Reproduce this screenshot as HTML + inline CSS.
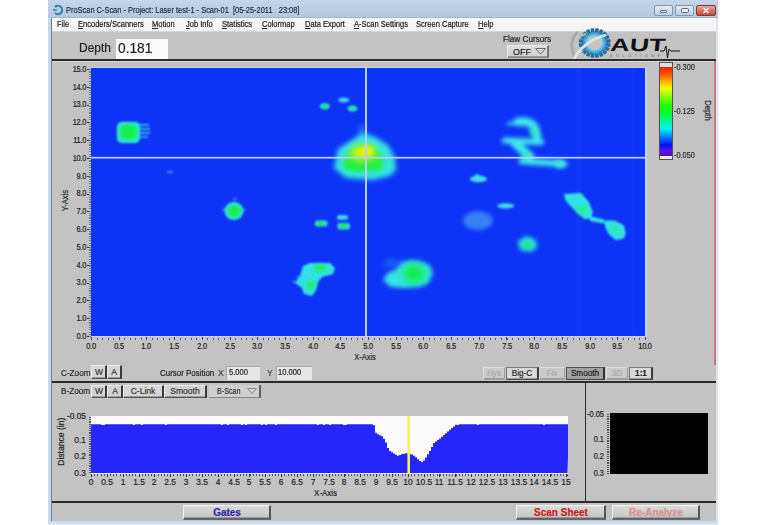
<!DOCTYPE html>
<html><head><meta charset="utf-8">
<style>
*{margin:0;padding:0;box-sizing:border-box;}
html,body{width:768px;height:525px;overflow:hidden;background:#fff;font-family:"Liberation Sans",sans-serif;}
div{position:absolute;white-space:nowrap;line-height:1;-webkit-text-stroke:0.2px currentColor;}
u{text-decoration:underline;text-underline-offset:1px;}
.btn{border-top:1px solid #ececec;border-left:1px solid #ececec;border-right:2px solid #3a3a3a;border-bottom:1px solid #555;box-shadow:inset 0 -1px 0 #9a9a9a;}
</style></head><body>
<div style="left:48px;top:0px;width:670px;height:525px;background:#c6d8ec;"></div>
<div style="left:48px;top:0px;width:670px;height:18px;background:linear-gradient(#c3d6ea,#b2c8e0);"></div>
<div style="left:51px;top:17px;width:667px;height:1px;background:#a4b6cc;"></div>
<svg style="position:absolute;left:52px;top:4px" width="12" height="12"><path d="M3 3 A4.2 4.2 0 1 1 3 9" fill="none" stroke="#2f7f9f" stroke-width="2"/><path d="M1 6 H5" stroke="#2f7f9f" stroke-width="1.5"/></svg>
<div style="left:65.50px;top:5.82px;font-size:9.3px;color:#14203a;font-weight:normal;transform:scaleX(0.8);transform-origin:0 0;-webkit-text-stroke:0.15px #1a2740;">ProScan C-Scan - Project: Laser test-1 - Scan-01&nbsp; [05-25-2011&nbsp;&nbsp; 23:08]</div>
<div style="left:654px;top:5px;width:19px;height:11px;border:1px solid #8296b0;border-radius:2px;background:linear-gradient(#e4edf7,#bccfe4);"></div>
<div style="left:659.5px;top:10px;width:7px;height:3px;border:1px solid #5a6476;border-radius:1px;background:#eef2f7"></div>
<div style="left:675px;top:5px;width:19px;height:11px;border:1px solid #8296b0;border-radius:2px;background:linear-gradient(#e4edf7,#bccfe4);"></div>
<div style="left:681px;top:7.5px;width:8px;height:5.5px;border:1px solid #5a6476;border-top-width:1.5px;border-radius:1.5px;background:#eef2f7"></div>
<div style="left:696px;top:5px;width:20px;height:11px;border:1px solid #7e3c33;border-radius:2px;background:linear-gradient(#eaa397,#c6473c);"></div>
<svg style="position:absolute;left:702px;top:7px" width="8" height="7"><path d="M1.5 1 L6.5 6 M6.5 1 L1.5 6" stroke="#fff" stroke-width="1.4"/></svg>
<div style="left:51px;top:18px;width:667px;height:503px;background:#c3c3c3;"></div>
<div style="left:51px;top:18px;width:1px;height:503px;background:#7c7c7c;"></div>
<div style="left:52px;top:18px;width:665px;height:14px;background:linear-gradient(#f9f7f7,#f3f2f2);"></div>
<div style="left:52px;top:31px;width:665px;height:1px;background:#d6d6d6;"></div>
<div style="left:56.50px;top:20.02px;font-size:9.3px;color:#111;font-weight:normal;transform:scaleX(0.81);transform-origin:0 0;-webkit-text-stroke:0.2px #222;">File</div>
<div style="left:77.80px;top:20.02px;font-size:9.3px;color:#111;font-weight:normal;transform:scaleX(0.81);transform-origin:0 0;-webkit-text-stroke:0.2px #222;"><u>E</u>ncoders/Scanners</div>
<div style="left:152.00px;top:20.02px;font-size:9.3px;color:#111;font-weight:normal;transform:scaleX(0.81);transform-origin:0 0;-webkit-text-stroke:0.2px #222;"><u>M</u>otion</div>
<div style="left:186.00px;top:20.02px;font-size:9.3px;color:#111;font-weight:normal;transform:scaleX(0.81);transform-origin:0 0;-webkit-text-stroke:0.2px #222;"><u>J</u>ob Info</div>
<div style="left:222.30px;top:20.02px;font-size:9.3px;color:#111;font-weight:normal;transform:scaleX(0.81);transform-origin:0 0;-webkit-text-stroke:0.2px #222;"><u>S</u>tatistics</div>
<div style="left:262.00px;top:20.02px;font-size:9.3px;color:#111;font-weight:normal;transform:scaleX(0.81);transform-origin:0 0;-webkit-text-stroke:0.2px #222;"><u>C</u>olormap</div>
<div style="left:305.20px;top:20.02px;font-size:9.3px;color:#111;font-weight:normal;transform:scaleX(0.81);transform-origin:0 0;-webkit-text-stroke:0.2px #222;"><u>D</u>ata Export</div>
<div style="left:353.60px;top:20.02px;font-size:9.3px;color:#111;font-weight:normal;transform:scaleX(0.81);transform-origin:0 0;-webkit-text-stroke:0.2px #222;"><u>A</u>-Scan Settings</div>
<div style="left:416.30px;top:20.02px;font-size:9.3px;color:#111;font-weight:normal;transform:scaleX(0.81);transform-origin:0 0;-webkit-text-stroke:0.2px #222;">Screen Capture</div>
<div style="left:478.00px;top:20.02px;font-size:9.3px;color:#111;font-weight:normal;transform:scaleX(0.81);transform-origin:0 0;-webkit-text-stroke:0.2px #222;"><u>H</u>elp</div>
<div style="left:79.00px;top:41.24px;font-size:13.2px;color:#222;font-weight:normal;transform:scaleX(0.91);transform-origin:0 0;">Depth</div>
<div style="left:115.5px;top:39px;width:52px;height:20px;background:#fbfbfb;"></div>
<div style="left:117.60px;top:40.85px;font-size:14px;color:#222;font-weight:normal;transform:scaleX(0.98);transform-origin:0 0;">0.181</div>
<div style="left:503.30px;top:34.02px;font-size:9.5px;color:#222;font-weight:normal;transform:scaleX(0.86);transform-origin:0 0;">Flaw Cursors</div>
<div class="btn" style="left:507px;top:45px;width:42px;height:13px;background:linear-gradient(#dedede,#cfcfcf);border-right:2px solid #777;border-bottom:1px solid #888;"></div>
<div style="left:513.00px;top:46.72px;font-size:9.5px;color:#222;font-weight:normal;transform:scaleX(0.95);transform-origin:0 0;">OFF</div>
<svg style="position:absolute;left:535px;top:48px" width="11" height="7"><path d="M0.5 0.5 H10.5 L5.5 6 Z" fill="none" stroke="#6a6a6a" stroke-width="1"/></svg>
<svg style="position:absolute;left:566px;top:26px" width="120" height="36" viewBox="0 0 120 36"><defs><radialGradient id="gg" cx="0.5" cy="0.5" r="0.5"><stop offset="0.6" stop-color="#7cd0f0"/><stop offset="1" stop-color="#2a86c0"/></radialGradient></defs><path d="M12 6 C5 11 4 22 9 31" fill="none" stroke="#a9a6a6" stroke-width="2.6"/><g transform="translate(28.7,17) scale(1.08,1)"><rect x="-1.7" y="-14.8" width="3.4" height="4.6" rx="0.5" fill="#1f6fa6" transform="rotate(9)"/><rect x="-1.7" y="-14.8" width="3.4" height="4.6" rx="0.5" fill="#1f6fa6" transform="rotate(27)"/><rect x="-1.7" y="-14.8" width="3.4" height="4.6" rx="0.5" fill="#1f6fa6" transform="rotate(45)"/><rect x="-1.7" y="-14.8" width="3.4" height="4.6" rx="0.5" fill="#1f6fa6" transform="rotate(63)"/><rect x="-1.7" y="-14.8" width="3.4" height="4.6" rx="0.5" fill="#1f6fa6" transform="rotate(81)"/><rect x="-1.7" y="-14.8" width="3.4" height="4.6" rx="0.5" fill="#1f6fa6" transform="rotate(99)"/><rect x="-1.7" y="-14.8" width="3.4" height="4.6" rx="0.5" fill="#1f6fa6" transform="rotate(117)"/><rect x="-1.7" y="-14.8" width="3.4" height="4.6" rx="0.5" fill="#1f6fa6" transform="rotate(135)"/><rect x="-1.7" y="-14.8" width="3.4" height="4.6" rx="0.5" fill="#1f6fa6" transform="rotate(153)"/><rect x="-1.7" y="-14.8" width="3.4" height="4.6" rx="0.5" fill="#1f6fa6" transform="rotate(171)"/><rect x="-1.7" y="-14.8" width="3.4" height="4.6" rx="0.5" fill="#1f6fa6" transform="rotate(189)"/><rect x="-1.7" y="-14.8" width="3.4" height="4.6" rx="0.5" fill="#1f6fa6" transform="rotate(207)"/><rect x="-1.7" y="-14.8" width="3.4" height="4.6" rx="0.5" fill="#1f6fa6" transform="rotate(225)"/><rect x="-1.7" y="-14.8" width="3.4" height="4.6" rx="0.5" fill="#1f6fa6" transform="rotate(243)"/><rect x="-1.7" y="-14.8" width="3.4" height="4.6" rx="0.5" fill="#1f6fa6" transform="rotate(261)"/><rect x="-1.7" y="-14.8" width="3.4" height="4.6" rx="0.5" fill="#1f6fa6" transform="rotate(279)"/><rect x="-1.7" y="-14.8" width="3.4" height="4.6" rx="0.5" fill="#1f6fa6" transform="rotate(297)"/><rect x="-1.7" y="-14.8" width="3.4" height="4.6" rx="0.5" fill="#1f6fa6" transform="rotate(315)"/><rect x="-1.7" y="-14.8" width="3.4" height="4.6" rx="0.5" fill="#1f6fa6" transform="rotate(333)"/><rect x="-1.7" y="-14.8" width="3.4" height="4.6" rx="0.5" fill="#1f6fa6" transform="rotate(351)"/><circle r="11.2" fill="url(#gg)"/><circle r="6.8" fill="#c8c3c3"/></g><path d="M8 33 C12 24 24 13 40 9" fill="none" stroke="#e4e2e2" stroke-width="2.6"/><path d="M11 15 C13 11 16 9 20 8" fill="none" stroke="#bdbdbd" stroke-width="2.5" opacity="0.8"/><text x="44" y="25" font-family="Liberation Sans" font-weight="bold" font-size="18" fill="#111" textLength="55" lengthAdjust="spacingAndGlyphs" transform="skewX(-6) translate(2.5,0)">AUT</text><text x="44" y="31" font-family="Liberation Sans" font-size="3.6" fill="#666" textLength="50" lengthAdjust="spacing">SOLUTIONS</text><path d="M94 25 H98 L100 20 L101.5 32 L103 23 L104.5 25 H114" fill="none" stroke="#111" stroke-width="1"/></svg>
<div style="left:52px;top:59px;width:665px;height:2px;background:#2c2c2c;"></div>
<div style="left:86.00px;top:331.85px;font-size:8.6px;color:#1c1c1c;font-weight:normal;transform:translateX(-100%) scaleX(0.86);transform-origin:100% 0;letter-spacing:-0.3px;">0.0</div>
<div style="left:86.00px;top:314.05px;font-size:8.6px;color:#1c1c1c;font-weight:normal;transform:translateX(-100%) scaleX(0.86);transform-origin:100% 0;letter-spacing:-0.3px;">1.0</div>
<div style="left:86.00px;top:296.25px;font-size:8.6px;color:#1c1c1c;font-weight:normal;transform:translateX(-100%) scaleX(0.86);transform-origin:100% 0;letter-spacing:-0.3px;">2.0</div>
<div style="left:86.00px;top:278.45px;font-size:8.6px;color:#1c1c1c;font-weight:normal;transform:translateX(-100%) scaleX(0.86);transform-origin:100% 0;letter-spacing:-0.3px;">3.0</div>
<div style="left:86.00px;top:260.65px;font-size:8.6px;color:#1c1c1c;font-weight:normal;transform:translateX(-100%) scaleX(0.86);transform-origin:100% 0;letter-spacing:-0.3px;">4.0</div>
<div style="left:86.00px;top:242.85px;font-size:8.6px;color:#1c1c1c;font-weight:normal;transform:translateX(-100%) scaleX(0.86);transform-origin:100% 0;letter-spacing:-0.3px;">5.0</div>
<div style="left:86.00px;top:225.05px;font-size:8.6px;color:#1c1c1c;font-weight:normal;transform:translateX(-100%) scaleX(0.86);transform-origin:100% 0;letter-spacing:-0.3px;">6.0</div>
<div style="left:86.00px;top:207.25px;font-size:8.6px;color:#1c1c1c;font-weight:normal;transform:translateX(-100%) scaleX(0.86);transform-origin:100% 0;letter-spacing:-0.3px;">7.0</div>
<div style="left:86.00px;top:189.45px;font-size:8.6px;color:#1c1c1c;font-weight:normal;transform:translateX(-100%) scaleX(0.86);transform-origin:100% 0;letter-spacing:-0.3px;">8.0</div>
<div style="left:86.00px;top:171.65px;font-size:8.6px;color:#1c1c1c;font-weight:normal;transform:translateX(-100%) scaleX(0.86);transform-origin:100% 0;letter-spacing:-0.3px;">9.0</div>
<div style="left:86.00px;top:153.85px;font-size:8.6px;color:#1c1c1c;font-weight:normal;transform:translateX(-100%) scaleX(0.86);transform-origin:100% 0;letter-spacing:-0.3px;">10.0</div>
<div style="left:86.00px;top:136.05px;font-size:8.6px;color:#1c1c1c;font-weight:normal;transform:translateX(-100%) scaleX(0.86);transform-origin:100% 0;letter-spacing:-0.3px;">11.0</div>
<div style="left:86.00px;top:118.25px;font-size:8.6px;color:#1c1c1c;font-weight:normal;transform:translateX(-100%) scaleX(0.86);transform-origin:100% 0;letter-spacing:-0.3px;">12.0</div>
<div style="left:86.00px;top:100.45px;font-size:8.6px;color:#1c1c1c;font-weight:normal;transform:translateX(-100%) scaleX(0.86);transform-origin:100% 0;letter-spacing:-0.3px;">13.0</div>
<div style="left:86.00px;top:82.65px;font-size:8.6px;color:#1c1c1c;font-weight:normal;transform:translateX(-100%) scaleX(0.86);transform-origin:100% 0;letter-spacing:-0.3px;">14.0</div>
<div style="left:86.00px;top:64.85px;font-size:8.6px;color:#1c1c1c;font-weight:normal;transform:translateX(-100%) scaleX(0.86);transform-origin:100% 0;letter-spacing:-0.3px;">15.0</div>
<div style="left:89px;top:68px;width:2px;height:269px;background:repeating-linear-gradient(#c8c8c8 0 0.9px,#3a3a3a 0.9px 1.78px);opacity:0.55"></div>
<div style="left:87px;top:336px;width:2px;height:1px;background:#333;"></div>
<div style="left:87px;top:318px;width:2px;height:1px;background:#333;"></div>
<div style="left:87px;top:300px;width:2px;height:1px;background:#333;"></div>
<div style="left:87px;top:283px;width:2px;height:1px;background:#333;"></div>
<div style="left:87px;top:265px;width:2px;height:1px;background:#333;"></div>
<div style="left:87px;top:247px;width:2px;height:1px;background:#333;"></div>
<div style="left:87px;top:229px;width:2px;height:1px;background:#333;"></div>
<div style="left:87px;top:211px;width:2px;height:1px;background:#333;"></div>
<div style="left:87px;top:194px;width:2px;height:1px;background:#333;"></div>
<div style="left:87px;top:176px;width:2px;height:1px;background:#333;"></div>
<div style="left:87px;top:158px;width:2px;height:1px;background:#333;"></div>
<div style="left:87px;top:140px;width:2px;height:1px;background:#333;"></div>
<div style="left:87px;top:122px;width:2px;height:1px;background:#333;"></div>
<div style="left:87px;top:105px;width:2px;height:1px;background:#333;"></div>
<div style="left:87px;top:87px;width:2px;height:1px;background:#333;"></div>
<div style="left:87px;top:69px;width:2px;height:1px;background:#333;"></div>
<div style="left:65.00px;top:196.36px;font-size:9px;color:#2a2a2a;font-weight:normal;transform:translateX(-50%) scaleX(0.85);transform-origin:50% 0;transform:translate(-50%,0) rotate(-90deg) scaleX(0.85);transform-origin:50% 50%;">Y-Axis</div>
<div style="left:91px;top:338px;width:555px;height:2px;background:repeating-linear-gradient(90deg,#3a3a3a 0 1px,#c8c8c8 1px 5.54px);opacity:0.8"></div>
<div style="left:91px;top:337px;width:1px;height:3px;background:#444;"></div>
<div style="left:91.00px;top:341.85px;font-size:8.6px;color:#1c1c1c;font-weight:normal;transform:translateX(-50%) scaleX(0.86);transform-origin:50% 0;letter-spacing:-0.3px;">0.0</div>
<div style="left:119px;top:337px;width:1px;height:3px;background:#444;"></div>
<div style="left:118.70px;top:341.85px;font-size:8.6px;color:#1c1c1c;font-weight:normal;transform:translateX(-50%) scaleX(0.86);transform-origin:50% 0;letter-spacing:-0.3px;">0.5</div>
<div style="left:146px;top:337px;width:1px;height:3px;background:#444;"></div>
<div style="left:146.40px;top:341.85px;font-size:8.6px;color:#1c1c1c;font-weight:normal;transform:translateX(-50%) scaleX(0.86);transform-origin:50% 0;letter-spacing:-0.3px;">1.0</div>
<div style="left:174px;top:337px;width:1px;height:3px;background:#444;"></div>
<div style="left:174.10px;top:341.85px;font-size:8.6px;color:#1c1c1c;font-weight:normal;transform:translateX(-50%) scaleX(0.86);transform-origin:50% 0;letter-spacing:-0.3px;">1.5</div>
<div style="left:202px;top:337px;width:1px;height:3px;background:#444;"></div>
<div style="left:201.80px;top:341.85px;font-size:8.6px;color:#1c1c1c;font-weight:normal;transform:translateX(-50%) scaleX(0.86);transform-origin:50% 0;letter-spacing:-0.3px;">2.0</div>
<div style="left:230px;top:337px;width:1px;height:3px;background:#444;"></div>
<div style="left:229.50px;top:341.85px;font-size:8.6px;color:#1c1c1c;font-weight:normal;transform:translateX(-50%) scaleX(0.86);transform-origin:50% 0;letter-spacing:-0.3px;">2.5</div>
<div style="left:257px;top:337px;width:1px;height:3px;background:#444;"></div>
<div style="left:257.20px;top:341.85px;font-size:8.6px;color:#1c1c1c;font-weight:normal;transform:translateX(-50%) scaleX(0.86);transform-origin:50% 0;letter-spacing:-0.3px;">3.0</div>
<div style="left:285px;top:337px;width:1px;height:3px;background:#444;"></div>
<div style="left:284.90px;top:341.85px;font-size:8.6px;color:#1c1c1c;font-weight:normal;transform:translateX(-50%) scaleX(0.86);transform-origin:50% 0;letter-spacing:-0.3px;">3.5</div>
<div style="left:313px;top:337px;width:1px;height:3px;background:#444;"></div>
<div style="left:312.60px;top:341.85px;font-size:8.6px;color:#1c1c1c;font-weight:normal;transform:translateX(-50%) scaleX(0.86);transform-origin:50% 0;letter-spacing:-0.3px;">4.0</div>
<div style="left:340px;top:337px;width:1px;height:3px;background:#444;"></div>
<div style="left:340.30px;top:341.85px;font-size:8.6px;color:#1c1c1c;font-weight:normal;transform:translateX(-50%) scaleX(0.86);transform-origin:50% 0;letter-spacing:-0.3px;">4.5</div>
<div style="left:368px;top:337px;width:1px;height:3px;background:#444;"></div>
<div style="left:368.00px;top:341.85px;font-size:8.6px;color:#1c1c1c;font-weight:normal;transform:translateX(-50%) scaleX(0.86);transform-origin:50% 0;letter-spacing:-0.3px;">5.0</div>
<div style="left:396px;top:337px;width:1px;height:3px;background:#444;"></div>
<div style="left:395.70px;top:341.85px;font-size:8.6px;color:#1c1c1c;font-weight:normal;transform:translateX(-50%) scaleX(0.86);transform-origin:50% 0;letter-spacing:-0.3px;">5.5</div>
<div style="left:423px;top:337px;width:1px;height:3px;background:#444;"></div>
<div style="left:423.40px;top:341.85px;font-size:8.6px;color:#1c1c1c;font-weight:normal;transform:translateX(-50%) scaleX(0.86);transform-origin:50% 0;letter-spacing:-0.3px;">6.0</div>
<div style="left:451px;top:337px;width:1px;height:3px;background:#444;"></div>
<div style="left:451.10px;top:341.85px;font-size:8.6px;color:#1c1c1c;font-weight:normal;transform:translateX(-50%) scaleX(0.86);transform-origin:50% 0;letter-spacing:-0.3px;">6.5</div>
<div style="left:479px;top:337px;width:1px;height:3px;background:#444;"></div>
<div style="left:478.80px;top:341.85px;font-size:8.6px;color:#1c1c1c;font-weight:normal;transform:translateX(-50%) scaleX(0.86);transform-origin:50% 0;letter-spacing:-0.3px;">7.0</div>
<div style="left:506px;top:337px;width:1px;height:3px;background:#444;"></div>
<div style="left:506.50px;top:341.85px;font-size:8.6px;color:#1c1c1c;font-weight:normal;transform:translateX(-50%) scaleX(0.86);transform-origin:50% 0;letter-spacing:-0.3px;">7.5</div>
<div style="left:534px;top:337px;width:1px;height:3px;background:#444;"></div>
<div style="left:534.20px;top:341.85px;font-size:8.6px;color:#1c1c1c;font-weight:normal;transform:translateX(-50%) scaleX(0.86);transform-origin:50% 0;letter-spacing:-0.3px;">8.0</div>
<div style="left:562px;top:337px;width:1px;height:3px;background:#444;"></div>
<div style="left:561.90px;top:341.85px;font-size:8.6px;color:#1c1c1c;font-weight:normal;transform:translateX(-50%) scaleX(0.86);transform-origin:50% 0;letter-spacing:-0.3px;">8.5</div>
<div style="left:590px;top:337px;width:1px;height:3px;background:#444;"></div>
<div style="left:589.60px;top:341.85px;font-size:8.6px;color:#1c1c1c;font-weight:normal;transform:translateX(-50%) scaleX(0.86);transform-origin:50% 0;letter-spacing:-0.3px;">9.0</div>
<div style="left:617px;top:337px;width:1px;height:3px;background:#444;"></div>
<div style="left:617.30px;top:341.85px;font-size:8.6px;color:#1c1c1c;font-weight:normal;transform:translateX(-50%) scaleX(0.86);transform-origin:50% 0;letter-spacing:-0.3px;">9.5</div>
<div style="left:645px;top:337px;width:1px;height:3px;background:#444;"></div>
<div style="left:645.00px;top:341.85px;font-size:8.6px;color:#1c1c1c;font-weight:normal;transform:translateX(-50%) scaleX(0.86);transform-origin:50% 0;letter-spacing:-0.3px;">10.0</div>
<div style="left:364.50px;top:352.76px;font-size:8.8px;color:#2a2a2a;font-weight:normal;transform:translateX(-50%) scaleX(0.85);transform-origin:50% 0;">X-Axis</div>
<svg style="position:absolute;left:91px;top:68px" width="554" height="268" viewBox="91 68 554 268">
<defs>
<filter id="b1" x="-50%" y="-50%" width="200%" height="200%"><feGaussianBlur stdDeviation="1.9"/></filter>
<filter id="b2" x="-50%" y="-50%" width="200%" height="200%"><feGaussianBlur stdDeviation="2.6"/></filter>
<filter id="b3" x="-50%" y="-50%" width="200%" height="200%"><feGaussianBlur stdDeviation="4"/></filter>
<filter id="b0" x="-50%" y="-50%" width="200%" height="200%"><feGaussianBlur stdDeviation="1"/></filter>
</defs>
<rect x="91" y="68" width="554" height="268" fill="#0d33f6"/>
<!-- faint vertical stripes -->
<rect x="577" y="68" width="3" height="268" fill="#2048f6" opacity="0.45" filter="url(#b0)"/>
<rect x="632" y="68" width="3" height="268" fill="#1a40f4" opacity="0.4" filter="url(#b0)"/>
<!-- blob 1 rectangular -->
<g filter="url(#b0)">
<rect x="117" y="122" width="23" height="21" rx="5" fill="#36e6e6"/>
<rect x="138" y="124" width="11" height="2" fill="#40d0f0" opacity="0.8"/>
<rect x="138" y="128" width="12" height="2" fill="#40d0f0" opacity="0.8"/>
<rect x="138" y="132" width="12" height="2" fill="#40d0f0" opacity="0.8"/>
<rect x="138" y="136" width="10" height="2" fill="#40d0f0" opacity="0.7"/>
</g>
<g filter="url(#b1)"><rect x="120" y="124" width="17" height="16" rx="5" fill="#14f050"/></g>
<g filter="url(#b0)"><ellipse cx="170" cy="172" rx="3" ry="1.2" fill="#4a90f4"/><ellipse cx="235" cy="199" rx="2.5" ry="1.2" fill="#3a70f4"/></g>
<!-- blob 2 -->
<g filter="url(#b0)"><ellipse cx="234" cy="211" rx="9.5" ry="9" fill="#36e2e2"/>
<rect x="222" y="209" width="24" height="1.5" fill="#40c8f0" opacity="0.7"/></g>
<g filter="url(#b1)"><ellipse cx="234" cy="211" rx="6.5" ry="6.5" fill="#14f048"/></g>
<!-- small top -->
<g filter="url(#b0)">
<ellipse cx="324.8" cy="106.2" rx="5" ry="3.2" fill="#30e0c0"/>
<ellipse cx="343.8" cy="100" rx="5.5" ry="2.6" fill="#40d8f0"/>
<ellipse cx="352.4" cy="108.5" rx="5" ry="3" fill="#30e0c0"/>
</g>
<g filter="url(#b0)">
<ellipse cx="324.8" cy="106.2" rx="2.5" ry="1.6" fill="#10e070"/>
<ellipse cx="352.4" cy="108.5" rx="2.5" ry="1.5" fill="#10e070"/>
</g>
<!-- main blob -->
<g filter="url(#b2)">
<ellipse cx="362" cy="130" rx="3" ry="6" fill="#2a7cf6" opacity="0.8"/>
<path d="M334 168 L338 149 L352 140 L362 133 L373 136 L388 145 L395 158 L396 170 L390 176 L372 180 L346 178 Z" fill="#36e4e4"/>
</g>
<g filter="url(#b2)">
<path d="M343 165 L347 153 L358 146 L368 145 L379 151 L384 162 L381 170 L360 172 L345 170 Z" fill="#20f040"/>
</g>
<g filter="url(#b3)">
<ellipse cx="363" cy="153" rx="13" ry="7" fill="#e8f800"/>
</g>
<g filter="url(#b2)">
<ellipse cx="367" cy="150" rx="6" ry="4" fill="#f8f000"/>
</g>
<!-- small mid -->
<g filter="url(#b0)">
<rect x="315" y="220.5" width="12.5" height="6" rx="2" fill="#30e0c0"/>
<rect x="337" y="215" width="11" height="4.8" rx="2" fill="#40d8f0"/>
<rect x="337.5" y="223" width="12.5" height="6.4" rx="2" fill="#30e0c0"/>
<rect x="318" y="222" width="6" height="3" fill="#10e860"/>
<rect x="340.5" y="224.5" width="6" height="3.4" fill="#10e860"/>
</g>
<!-- cluster -->
<g filter="url(#b0)">
<path d="M303 266 L310 263 L330 263 L335 268 L333 274 L322 277 L318 282 L316 290 L312 296 L304 294 L302 288 L295 283 L300 276 Z" fill="#36e2e2"/>
<rect x="292" y="281" width="14" height="1.5" fill="#40c8f0" opacity="0.7"/>
<rect x="296" y="276" width="10" height="1.5" fill="#40c8f0" opacity="0.7"/>
</g>
<g filter="url(#b1)">
<ellipse cx="320" cy="268" rx="6" ry="3.5" fill="#14f048"/>
<ellipse cx="311" cy="285" rx="4.5" ry="3.5" fill="#14f048"/>
</g>
<!-- blob 7 -->
<g filter="url(#b1)">
<path d="M383.3 280 L387.3 273.3 L396.7 269.3 L402 262.7 L410 260 L420.7 261.3 L430 265.3 L432.7 273.3 L428.7 282.7 L420.7 286.7 L403.3 288 L390 286.7 Z" fill="#36e4e4"/>
<path d="M386 260 L402 262 M384 265 L398 266" stroke="#30c0f0" stroke-width="1.5" opacity="0.8"/>
</g>
<g filter="url(#b3)"><ellipse cx="414" cy="273.5" rx="11" ry="9" fill="#10f040"/></g>
<!-- "2" shape -->
<g filter="url(#b1)" fill="none" stroke="#40e8ea" stroke-linecap="round" stroke-linejoin="round">
<path d="M508 124 L520 122" stroke-width="3"/>
<path d="M518 122 Q530 120 535 128 L537 137" stroke-width="8.5"/>
<path d="M505 140.5 L541 142" stroke-width="6"/>
<path d="M515 143 L530 157" stroke-width="9"/>
<path d="M522 161 L560 163.5" stroke-width="6.5"/>
</g>
<g filter="url(#b1)"><ellipse cx="561" cy="164" rx="6.5" ry="4" fill="#40e8ea"/></g>
<g filter="url(#b1)" fill="#28f0a8"><ellipse cx="533" cy="132" rx="3.5" ry="3"/><ellipse cx="527" cy="156" rx="4" ry="3"/></g>
<!-- right small -->
<g filter="url(#b0)">
<path d="M470 181 L477 173.5 L487 181 Z" fill="#40e0e8"/>
<ellipse cx="478.5" cy="179" rx="8.5" ry="3.2" fill="#40e0e8"/>
<ellipse cx="505.7" cy="205.8" rx="8.5" ry="2.6" fill="#40d8e8"/>
</g>
<g filter="url(#b1)"><ellipse cx="478" cy="220.6" rx="15" ry="9.5" fill="#3a88f4" opacity="0.9"/></g>
<g filter="url(#b1)">
<path d="M518 241 L527 236 L536 240 L537 248 L530 252 L520 250 Z" fill="#30e0e0"/>
<ellipse cx="527" cy="245" rx="5" ry="3.5" fill="#10f050"/>
</g>
<!-- diagonal streak -->
<g filter="url(#b0)" fill="#36e2e2">
<path d="M564 194 L581 193 L589 202 L592.7 211.3 L591.6 218 L584.7 219.3 L577.9 213.6 L569.9 205.6 L565.3 199.9 Z"/>
<path d="M589 216 L604 219.5 L604 223.5 L590 221 Z"/>
<path d="M604 220.4 L614.4 220.4 L623.6 225 L625.9 233 L623.6 238.7 L615.6 239.9 L608.7 234 L605.3 227.3 Z"/>
</g>
<g filter="url(#b1)" fill="#20f080"><ellipse cx="582" cy="210" rx="5" ry="4"/><ellipse cx="616" cy="229" rx="3" ry="3"/></g>
<!-- crosshair -->
<rect x="365" y="68" width="2" height="268" fill="#b8cef6"/>
<rect x="91" y="156.8" width="554" height="1.8" fill="#b8cef6"/>
</svg>
<div style="left:645px;top:67px;width:2px;height:270px;background:#c9d4f4;"></div>
<div style="left:91px;top:67px;width:556px;height:1px;background:#c6d2ea;"></div>
<div style="left:52px;top:61px;width:665px;height:1px;background:#d6d6d6;"></div>
<div style="left:91px;top:336px;width:556px;height:1px;background:#c9d4f4;"></div>
<div style="left:659px;top:62px;width:14px;height:98px;border:1px solid #505050;background:linear-gradient(#e0e0e0 0 4px,#ff1a00 4px,#ff5a00 12px,#ffd000 21px,#e8ff00 26px,#20ff00 42px,#00ff40 52px,#00f0ff 66px,#0060ff 76px,#0010ff 82px,#6010e0 88px,#5010c0 93px,#e8e8e8 93px);"></div>
<div style="left:673.50px;top:62.66px;font-size:9px;color:#2a2a2a;font-weight:normal;transform:scaleX(0.82);transform-origin:0 0;">-0.300</div>
<div style="left:673.50px;top:106.66px;font-size:9px;color:#2a2a2a;font-weight:normal;transform:scaleX(0.82);transform-origin:0 0;">-0.125</div>
<div style="left:673.50px;top:151.26px;font-size:9px;color:#2a2a2a;font-weight:normal;transform:scaleX(0.82);transform-origin:0 0;">-0.050</div>
<div style="left:707.00px;top:105.66px;font-size:9px;color:#2a2a2a;font-weight:normal;transform:translateX(-50%) scaleX(0.86);transform-origin:50% 0;transform:translate(-50%,0) rotate(90deg) scaleX(0.86);transform-origin:50% 50%;">Depth</div>
<div style="left:714px;top:61px;width:2px;height:304px;background:#c77a78;"></div>
<div style="left:60.70px;top:368.42px;font-size:9.5px;color:#2a2a2a;font-weight:normal;transform:scaleX(0.86);transform-origin:0 0;">C-Zoom</div>
<div class="btn" style="left:91px;top:365px;width:16px;height:14px;background:#d6d6d6;"></div>
<div style="left:98.50px;top:367.42px;font-size:9.5px;color:#333;font-weight:normal;transform:translateX(-50%) scaleX(0.9);transform-origin:50% 0;">W</div>
<div class="btn" style="left:107px;top:365px;width:15px;height:14px;background:#d6d6d6;"></div>
<div style="left:114.00px;top:367.42px;font-size:9.5px;color:#333;font-weight:normal;transform:translateX(-50%) scaleX(0.9);transform-origin:50% 0;">A</div>
<div style="left:159.80px;top:368.02px;font-size:9.5px;color:#222;font-weight:normal;transform:scaleX(0.835);transform-origin:0 0;">Cursor Position</div>
<div style="left:218.40px;top:368.02px;font-size:9.5px;color:#444;font-weight:normal;transform:scaleX(0.9);transform-origin:0 0;">X</div>
<div style="left:226px;top:365.5px;width:34px;height:14px;background:#e6e6e6;border-top:1px solid #a8a8a8;border-left:1px solid #a8a8a8;"></div>
<div style="left:228.50px;top:368.45px;font-size:8.6px;color:#222;font-weight:normal;transform:scaleX(0.88);transform-origin:0 0;">5.000</div>
<div style="left:267.00px;top:368.02px;font-size:9.5px;color:#444;font-weight:normal;transform:scaleX(0.9);transform-origin:0 0;">Y</div>
<div style="left:275.5px;top:365.5px;width:36px;height:14px;background:#e6e6e6;border-top:1px solid #a8a8a8;border-left:1px solid #a8a8a8;"></div>
<div style="left:278.00px;top:368.45px;font-size:8.6px;color:#222;font-weight:normal;transform:scaleX(0.88);transform-origin:0 0;">10.000</div>
<div class="btn" style="left:483px;top:367px;width:22px;height:13px;background:#cacaca;border-top:1px solid #dedede;border-left:1px solid #dedede;border-right:1px solid #9c9c9c;border-bottom:1px solid #a4a4a4;"></div>
<div style="left:493.50px;top:369.32px;font-size:9.3px;color:#ababab;font-weight:normal;transform:translateX(-50%) scaleX(0.88);transform-origin:50% 0;">Hys</div>
<div class="btn" style="left:506px;top:367px;width:33px;height:13px;background:#d9d9d9;border-top:1px solid #7a7a7a;border-left:1px solid #7a7a7a;border-right:2px solid #3a3a3a;border-bottom:1px solid #4a4a4a;"></div>
<div style="left:522.00px;top:369.32px;font-size:9.3px;color:#262626;font-weight:normal;transform:translateX(-50%) scaleX(0.88);transform-origin:50% 0;">Big-C</div>
<div class="btn" style="left:539px;top:367px;width:26px;height:13px;background:#cacaca;border-top:1px solid #dedede;border-left:1px solid #dedede;border-right:1px solid #9c9c9c;border-bottom:1px solid #a4a4a4;"></div>
<div style="left:551.50px;top:369.32px;font-size:9.3px;color:#ababab;font-weight:normal;transform:translateX(-50%) scaleX(0.88);transform-origin:50% 0;">Fix</div>
<div class="btn" style="left:566px;top:367px;width:39px;height:13px;background:#a2a2a2;border-top:1px solid #555;border-left:1px solid #555;border-right:2px solid #333;border-bottom:1px solid #444;"></div>
<div style="left:585.00px;top:369.32px;font-size:9.3px;color:#1a1a1a;font-weight:normal;transform:translateX(-50%) scaleX(0.88);transform-origin:50% 0;">Smooth</div>
<div class="btn" style="left:606px;top:367px;width:22px;height:13px;background:#cacaca;border-top:1px solid #dedede;border-left:1px solid #dedede;border-right:1px solid #9c9c9c;border-bottom:1px solid #a4a4a4;"></div>
<div style="left:616.50px;top:369.32px;font-size:9.3px;color:#ababab;font-weight:normal;transform:translateX(-50%) scaleX(0.88);transform-origin:50% 0;">3D</div>
<div class="btn" style="left:629px;top:367px;width:24px;height:13px;background:#d9d9d9;border-top:1px solid #7a7a7a;border-left:1px solid #7a7a7a;border-right:2px solid #3a3a3a;border-bottom:1px solid #4a4a4a;"></div>
<div style="left:640.50px;top:369.32px;font-size:9.3px;color:#222;font-weight:bold;transform:translateX(-50%) scaleX(0.88);transform-origin:50% 0;">1:1</div>
<div style="left:52px;top:381px;width:664px;height:2px;background:#2c2c2c;"></div>
<div style="left:584.5px;top:382px;width:1.8px;height:119px;background:#2c2c2c;"></div>
<div style="left:61.00px;top:386.22px;font-size:9.5px;color:#2a2a2a;font-weight:normal;transform:scaleX(0.86);transform-origin:0 0;">B-Zoom</div>
<div class="btn" style="left:91px;top:384.5px;width:16px;height:13.0px;background:#d2d2d2;"></div>
<div style="left:98.50px;top:386.22px;font-size:9.5px;color:#333;font-weight:normal;transform:translateX(-50%) scaleX(0.9);transform-origin:50% 0;">W</div>
<div class="btn" style="left:107px;top:384.5px;width:16px;height:13.0px;background:#d2d2d2;"></div>
<div style="left:114.50px;top:386.22px;font-size:9.5px;color:#333;font-weight:normal;transform:translateX(-50%) scaleX(0.9);transform-origin:50% 0;">A</div>
<div class="btn" style="left:123px;top:384.5px;width:41px;height:13.0px;background:#d6d6d6;"></div>
<div style="left:143.00px;top:386.22px;font-size:9.5px;color:#333;font-weight:normal;transform:translateX(-50%) scaleX(0.9);transform-origin:50% 0;">C-Link</div>
<div class="btn" style="left:164px;top:384.5px;width:43px;height:13.0px;background:#d2d2d2;"></div>
<div style="left:185.00px;top:386.22px;font-size:9.5px;color:#333;font-weight:normal;transform:translateX(-50%) scaleX(0.9);transform-origin:50% 0;">Smooth</div>
<div style="left:209px;top:384.5px;width:52px;height:13px;background:#cfcfcf;border-right:2px solid #606060;border-bottom:1px solid #888;"></div>
<div style="left:216.60px;top:386.66px;font-size:9px;color:#333;font-weight:normal;transform:scaleX(0.8);transform-origin:0 0;">B-Scan</div>
<svg style="position:absolute;left:247px;top:388px" width="10" height="7"><path d="M0.5 0.5 H9.5 L5 5.5 Z" fill="none" stroke="#8a8a8a" stroke-width="1"/></svg>
<svg style="position:absolute;left:91px;top:416px" width="477" height="58" viewBox="91 416 477 58">
<rect x="91" y="416" width="477" height="58" fill="#fbfbfb"/>
<path d="M91 473 L91.0 424.3 L93.0 424.3 L93.0 424.3 L95.0 424.3 L95.0 424.3 L97.0 424.3 L97.0 424.3 L99.0 424.3 L99.0 424.3 L101.0 424.3 L101.0 425.1 L103.0 425.1 L103.0 425.1 L105.0 425.1 L105.0 424.3 L107.0 424.3 L107.0 424.3 L109.0 424.3 L109.0 424.3 L111.0 424.3 L111.0 424.3 L113.0 424.3 L113.0 424.3 L115.0 424.3 L115.0 424.3 L117.0 424.3 L117.0 424.3 L119.0 424.3 L119.0 424.3 L121.0 424.3 L121.0 424.3 L123.0 424.3 L123.0 424.3 L125.0 424.3 L125.0 424.3 L127.0 424.3 L127.0 424.3 L129.0 424.3 L129.0 424.3 L131.0 424.3 L131.0 424.3 L133.0 424.3 L133.0 425.1 L135.0 425.1 L135.0 424.3 L137.0 424.3 L137.0 424.3 L139.0 424.3 L139.0 424.3 L141.0 424.3 L141.0 425.1 L143.0 425.1 L143.0 424.3 L145.0 424.3 L145.0 424.3 L147.0 424.3 L147.0 424.3 L149.0 424.3 L149.0 424.3 L151.0 424.3 L151.0 424.3 L153.0 424.3 L153.0 424.3 L155.0 424.3 L155.0 424.3 L157.0 424.3 L157.0 424.3 L159.0 424.3 L159.0 424.3 L161.0 424.3 L161.0 424.3 L163.0 424.3 L163.0 424.3 L165.0 424.3 L165.0 425.1 L167.0 425.1 L167.0 424.3 L169.0 424.3 L169.0 424.3 L171.0 424.3 L171.0 424.3 L173.0 424.3 L173.0 424.3 L175.0 424.3 L175.0 424.3 L177.0 424.3 L177.0 424.3 L179.0 424.3 L179.0 424.3 L181.0 424.3 L181.0 424.3 L183.0 424.3 L183.0 424.3 L185.0 424.3 L185.0 424.3 L187.0 424.3 L187.0 424.3 L189.0 424.3 L189.0 424.3 L191.0 424.3 L191.0 424.3 L193.0 424.3 L193.0 424.3 L195.0 424.3 L195.0 424.3 L197.0 424.3 L197.0 424.3 L199.0 424.3 L199.0 424.3 L201.0 424.3 L201.0 424.3 L203.0 424.3 L203.0 424.3 L205.0 424.3 L205.0 424.3 L207.0 424.3 L207.0 424.3 L209.0 424.3 L209.0 424.3 L211.0 424.3 L211.0 424.3 L213.0 424.3 L213.0 424.3 L215.0 424.3 L215.0 424.3 L217.0 424.3 L217.0 424.3 L219.0 424.3 L219.0 424.3 L221.0 424.3 L221.0 425.1 L223.0 425.1 L223.0 424.3 L225.0 424.3 L225.0 424.3 L227.0 424.3 L227.0 425.1 L229.0 425.1 L229.0 424.3 L231.0 424.3 L231.0 424.3 L233.0 424.3 L233.0 424.3 L235.0 424.3 L235.0 424.3 L237.0 424.3 L237.0 424.3 L239.0 424.3 L239.0 424.3 L241.0 424.3 L241.0 425.1 L243.0 425.1 L243.0 424.3 L245.0 424.3 L245.0 425.1 L247.0 425.1 L247.0 424.3 L249.0 424.3 L249.0 424.3 L251.0 424.3 L251.0 424.3 L253.0 424.3 L253.0 424.3 L255.0 424.3 L255.0 424.3 L257.0 424.3 L257.0 424.3 L259.0 424.3 L259.0 424.3 L261.0 424.3 L261.0 425.1 L263.0 425.1 L263.0 424.3 L265.0 424.3 L265.0 425.1 L267.0 425.1 L267.0 424.3 L269.0 424.3 L269.0 424.3 L271.0 424.3 L271.0 424.3 L273.0 424.3 L273.0 424.3 L275.0 424.3 L275.0 425.1 L277.0 425.1 L277.0 424.3 L279.0 424.3 L279.0 424.3 L281.0 424.3 L281.0 424.3 L283.0 424.3 L283.0 424.3 L285.0 424.3 L285.0 424.3 L287.0 424.3 L287.0 424.3 L289.0 424.3 L289.0 424.3 L291.0 424.3 L291.0 424.3 L293.0 424.3 L293.0 424.3 L295.0 424.3 L295.0 424.3 L297.0 424.3 L297.0 424.3 L299.0 424.3 L299.0 424.3 L301.0 424.3 L301.0 424.3 L303.0 424.3 L303.0 424.3 L305.0 424.3 L305.0 424.3 L307.0 424.3 L307.0 424.3 L309.0 424.3 L309.0 424.3 L311.0 424.3 L311.0 424.3 L313.0 424.3 L313.0 424.3 L315.0 424.3 L315.0 424.3 L317.0 424.3 L317.0 425.1 L319.0 425.1 L319.0 424.3 L321.0 424.3 L321.0 424.3 L323.0 424.3 L323.0 425.1 L325.0 425.1 L325.0 424.3 L327.0 424.3 L327.0 424.3 L329.0 424.3 L329.0 425.1 L331.0 425.1 L331.0 424.3 L333.0 424.3 L333.0 424.3 L335.0 424.3 L335.0 424.3 L337.0 424.3 L337.0 424.3 L339.0 424.3 L339.0 424.3 L341.0 424.3 L341.0 424.3 L343.0 424.3 L343.0 425.1 L345.0 425.1 L345.0 425.1 L347.0 425.1 L347.0 424.3 L349.0 424.3 L349.0 424.3 L351.0 424.3 L351.0 424.3 L353.0 424.3 L353.0 424.3 L355.0 424.3 L355.0 424.3 L357.0 424.3 L357.0 424.3 L359.0 424.3 L359.0 424.3 L361.0 424.3 L361.0 424.3 L363.0 424.3 L363.0 424.3 L365.0 424.3 L365.0 424.3 L367.0 424.3 L367.0 424.3 L369.0 424.3 L369.0 424.3 L371.0 424.3 L371.0 424.3 L373.0 424.3 L373.0 425.3 L375.0 425.3 L375.0 432.8 L377.0 432.8 L377.0 434.2 L379.0 434.2 L379.0 435.2 L381.0 435.2 L381.0 436.2 L383.0 436.2 L383.0 438.7 L385.0 438.7 L385.0 442.6 L387.0 442.6 L387.0 448.0 L389.0 448.0 L389.0 451.0 L391.0 451.0 L391.0 452.3 L393.0 452.3 L393.0 453.5 L395.0 453.5 L395.0 454.7 L397.0 454.7 L397.0 455.7 L399.0 455.7 L399.0 454.9 L401.0 454.9 L401.0 454.2 L403.0 454.2 L403.0 453.7 L405.0 453.7 L405.0 453.2 L407.0 453.2 L407.0 453.3 L409.0 453.3 L409.0 453.9 L411.0 453.9 L411.0 454.5 L413.0 454.5 L413.0 455.8 L415.0 455.8 L415.0 457.2 L417.0 457.2 L417.0 459.2 L419.0 459.2 L419.0 461.0 L421.0 461.0 L421.0 462.0 L423.0 462.0 L423.0 460.5 L425.0 460.5 L425.0 457.5 L427.0 457.5 L427.0 454.3 L429.0 454.3 L429.0 451.1 L431.0 451.1 L431.0 447.0 L433.0 447.0 L433.0 443.0 L435.0 443.0 L435.0 441.6 L437.0 441.6 L437.0 440.1 L439.0 440.1 L439.0 438.5 L441.0 438.5 L441.0 436.8 L443.0 436.8 L443.0 435.0 L445.0 435.0 L445.0 433.3 L447.0 433.3 L447.0 431.6 L449.0 431.6 L449.0 429.8 L451.0 429.8 L451.0 428.1 L453.0 428.1 L453.0 426.4 L455.0 426.4 L455.0 424.7 L457.0 424.7 L457.0 425.1 L459.0 425.1 L459.0 424.3 L461.0 424.3 L461.0 424.3 L463.0 424.3 L463.0 424.3 L465.0 424.3 L465.0 424.3 L467.0 424.3 L467.0 424.3 L469.0 424.3 L469.0 424.3 L471.0 424.3 L471.0 424.3 L473.0 424.3 L473.0 424.3 L475.0 424.3 L475.0 424.3 L477.0 424.3 L477.0 425.1 L479.0 425.1 L479.0 424.3 L481.0 424.3 L481.0 424.3 L483.0 424.3 L483.0 424.3 L485.0 424.3 L485.0 424.3 L487.0 424.3 L487.0 424.3 L489.0 424.3 L489.0 424.3 L491.0 424.3 L491.0 424.3 L493.0 424.3 L493.0 424.3 L495.0 424.3 L495.0 424.3 L497.0 424.3 L497.0 424.3 L499.0 424.3 L499.0 424.3 L501.0 424.3 L501.0 424.3 L503.0 424.3 L503.0 424.3 L505.0 424.3 L505.0 424.3 L507.0 424.3 L507.0 424.3 L509.0 424.3 L509.0 424.3 L511.0 424.3 L511.0 424.3 L513.0 424.3 L513.0 424.3 L515.0 424.3 L515.0 424.3 L517.0 424.3 L517.0 424.3 L519.0 424.3 L519.0 424.3 L521.0 424.3 L521.0 424.3 L523.0 424.3 L523.0 424.3 L525.0 424.3 L525.0 424.3 L527.0 424.3 L527.0 424.3 L529.0 424.3 L529.0 424.3 L531.0 424.3 L531.0 424.3 L533.0 424.3 L533.0 424.3 L535.0 424.3 L535.0 424.3 L537.0 424.3 L537.0 424.3 L539.0 424.3 L539.0 424.3 L541.0 424.3 L541.0 424.3 L543.0 424.3 L543.0 425.1 L545.0 425.1 L545.0 424.3 L547.0 424.3 L547.0 424.3 L549.0 424.3 L549.0 424.3 L551.0 424.3 L551.0 424.3 L553.0 424.3 L553.0 424.3 L555.0 424.3 L555.0 424.3 L557.0 424.3 L557.0 424.3 L559.0 424.3 L559.0 424.3 L561.0 424.3 L561.0 424.3 L563.0 424.3 L563.0 424.3 L565.0 424.3 L565.0 424.3 L567.0 424.3 L567.0 424.3 L569.0 424.3 L567.5 473 Z" fill="#2626fa"/>
<rect x="407.4" y="416" width="2.6" height="58" fill="#f2f25a"/>
</svg>
<div style="left:86.00px;top:411.72px;font-size:9.3px;color:#222;font-weight:normal;transform:translateX(-100%) scaleX(0.9);transform-origin:100% 0;">-0.05</div>
<div style="left:86.00px;top:435.92px;font-size:9.3px;color:#222;font-weight:normal;transform:translateX(-100%) scaleX(0.9);transform-origin:100% 0;">0.1</div>
<div style="left:86.00px;top:452.12px;font-size:9.3px;color:#222;font-weight:normal;transform:translateX(-100%) scaleX(0.9);transform-origin:100% 0;">0.2</div>
<div style="left:86.00px;top:468.52px;font-size:9.3px;color:#222;font-weight:normal;transform:translateX(-100%) scaleX(0.9);transform-origin:100% 0;">0.3</div>
<div style="left:89px;top:416px;width:2px;height:58px;background:repeating-linear-gradient(#c8c8c8 0 1px,#333 1px 2.2px);opacity:0.8"></div>
<div style="left:60.50px;top:436.92px;font-size:9.5px;color:#222;font-weight:normal;transform:translateX(-50%) scaleX(0.9);transform-origin:50% 0;transform:translate(-50%,0) rotate(-90deg) scaleX(0.9);transform-origin:50% 50%;">Distance (in)</div>
<div style="left:91px;top:474px;width:477px;height:2px;background:repeating-linear-gradient(90deg,#333 0 1px,#c8c8c8 1px 3.17px);opacity:0.8"></div>
<div style="left:91px;top:474px;width:1px;height:3px;background:#333;"></div>
<div style="left:91.00px;top:478.42px;font-size:9.3px;color:#222;font-weight:normal;transform:translateX(-50%) scaleX(0.9);transform-origin:50% 0;">0</div>
<div style="left:107px;top:474px;width:1px;height:3px;background:#333;"></div>
<div style="left:106.84px;top:478.42px;font-size:9.3px;color:#222;font-weight:normal;transform:translateX(-50%) scaleX(0.9);transform-origin:50% 0;">0.5</div>
<div style="left:123px;top:474px;width:1px;height:3px;background:#333;"></div>
<div style="left:122.67px;top:478.42px;font-size:9.3px;color:#222;font-weight:normal;transform:translateX(-50%) scaleX(0.9);transform-origin:50% 0;">1</div>
<div style="left:139px;top:474px;width:1px;height:3px;background:#333;"></div>
<div style="left:138.50px;top:478.42px;font-size:9.3px;color:#222;font-weight:normal;transform:translateX(-50%) scaleX(0.9);transform-origin:50% 0;">1.5</div>
<div style="left:154px;top:474px;width:1px;height:3px;background:#333;"></div>
<div style="left:154.34px;top:478.42px;font-size:9.3px;color:#222;font-weight:normal;transform:translateX(-50%) scaleX(0.9);transform-origin:50% 0;">2</div>
<div style="left:170px;top:474px;width:1px;height:3px;background:#333;"></div>
<div style="left:170.18px;top:478.42px;font-size:9.3px;color:#222;font-weight:normal;transform:translateX(-50%) scaleX(0.9);transform-origin:50% 0;">2.5</div>
<div style="left:186px;top:474px;width:1px;height:3px;background:#333;"></div>
<div style="left:186.01px;top:478.42px;font-size:9.3px;color:#222;font-weight:normal;transform:translateX(-50%) scaleX(0.9);transform-origin:50% 0;">3</div>
<div style="left:202px;top:474px;width:1px;height:3px;background:#333;"></div>
<div style="left:201.84px;top:478.42px;font-size:9.3px;color:#222;font-weight:normal;transform:translateX(-50%) scaleX(0.9);transform-origin:50% 0;">3.5</div>
<div style="left:218px;top:474px;width:1px;height:3px;background:#333;"></div>
<div style="left:217.68px;top:478.42px;font-size:9.3px;color:#222;font-weight:normal;transform:translateX(-50%) scaleX(0.9);transform-origin:50% 0;">4</div>
<div style="left:234px;top:474px;width:1px;height:3px;background:#333;"></div>
<div style="left:233.52px;top:478.42px;font-size:9.3px;color:#222;font-weight:normal;transform:translateX(-50%) scaleX(0.9);transform-origin:50% 0;">4.5</div>
<div style="left:249px;top:474px;width:1px;height:3px;background:#333;"></div>
<div style="left:249.35px;top:478.42px;font-size:9.3px;color:#222;font-weight:normal;transform:translateX(-50%) scaleX(0.9);transform-origin:50% 0;">5</div>
<div style="left:265px;top:474px;width:1px;height:3px;background:#333;"></div>
<div style="left:265.19px;top:478.42px;font-size:9.3px;color:#222;font-weight:normal;transform:translateX(-50%) scaleX(0.9);transform-origin:50% 0;">5.5</div>
<div style="left:281px;top:474px;width:1px;height:3px;background:#333;"></div>
<div style="left:281.02px;top:478.42px;font-size:9.3px;color:#222;font-weight:normal;transform:translateX(-50%) scaleX(0.9);transform-origin:50% 0;">6</div>
<div style="left:297px;top:474px;width:1px;height:3px;background:#333;"></div>
<div style="left:296.86px;top:478.42px;font-size:9.3px;color:#222;font-weight:normal;transform:translateX(-50%) scaleX(0.9);transform-origin:50% 0;">6.5</div>
<div style="left:313px;top:474px;width:1px;height:3px;background:#333;"></div>
<div style="left:312.69px;top:478.42px;font-size:9.3px;color:#222;font-weight:normal;transform:translateX(-50%) scaleX(0.9);transform-origin:50% 0;">7</div>
<div style="left:329px;top:474px;width:1px;height:3px;background:#333;"></div>
<div style="left:328.52px;top:478.42px;font-size:9.3px;color:#222;font-weight:normal;transform:translateX(-50%) scaleX(0.9);transform-origin:50% 0;">7.5</div>
<div style="left:344px;top:474px;width:1px;height:3px;background:#333;"></div>
<div style="left:344.36px;top:478.42px;font-size:9.3px;color:#222;font-weight:normal;transform:translateX(-50%) scaleX(0.9);transform-origin:50% 0;">8</div>
<div style="left:360px;top:474px;width:1px;height:3px;background:#333;"></div>
<div style="left:360.19px;top:478.42px;font-size:9.3px;color:#222;font-weight:normal;transform:translateX(-50%) scaleX(0.9);transform-origin:50% 0;">8.5</div>
<div style="left:376px;top:474px;width:1px;height:3px;background:#333;"></div>
<div style="left:376.03px;top:478.42px;font-size:9.3px;color:#222;font-weight:normal;transform:translateX(-50%) scaleX(0.9);transform-origin:50% 0;">9</div>
<div style="left:392px;top:474px;width:1px;height:3px;background:#333;"></div>
<div style="left:391.87px;top:478.42px;font-size:9.3px;color:#222;font-weight:normal;transform:translateX(-50%) scaleX(0.9);transform-origin:50% 0;">9.5</div>
<div style="left:408px;top:474px;width:1px;height:3px;background:#333;"></div>
<div style="left:407.70px;top:478.42px;font-size:9.3px;color:#222;font-weight:normal;transform:translateX(-50%) scaleX(0.9);transform-origin:50% 0;">10</div>
<div style="left:424px;top:474px;width:1px;height:3px;background:#333;"></div>
<div style="left:423.54px;top:478.42px;font-size:9.3px;color:#222;font-weight:normal;transform:translateX(-50%) scaleX(0.9);transform-origin:50% 0;">10.5</div>
<div style="left:439px;top:474px;width:1px;height:3px;background:#333;"></div>
<div style="left:439.37px;top:478.42px;font-size:9.3px;color:#222;font-weight:normal;transform:translateX(-50%) scaleX(0.9);transform-origin:50% 0;">11</div>
<div style="left:455px;top:474px;width:1px;height:3px;background:#333;"></div>
<div style="left:455.21px;top:478.42px;font-size:9.3px;color:#222;font-weight:normal;transform:translateX(-50%) scaleX(0.9);transform-origin:50% 0;">11.5</div>
<div style="left:471px;top:474px;width:1px;height:3px;background:#333;"></div>
<div style="left:471.04px;top:478.42px;font-size:9.3px;color:#222;font-weight:normal;transform:translateX(-50%) scaleX(0.9);transform-origin:50% 0;">12</div>
<div style="left:487px;top:474px;width:1px;height:3px;background:#333;"></div>
<div style="left:486.88px;top:478.42px;font-size:9.3px;color:#222;font-weight:normal;transform:translateX(-50%) scaleX(0.9);transform-origin:50% 0;">12.5</div>
<div style="left:503px;top:474px;width:1px;height:3px;background:#333;"></div>
<div style="left:502.71px;top:478.42px;font-size:9.3px;color:#222;font-weight:normal;transform:translateX(-50%) scaleX(0.9);transform-origin:50% 0;">13</div>
<div style="left:519px;top:474px;width:1px;height:3px;background:#333;"></div>
<div style="left:518.55px;top:478.42px;font-size:9.3px;color:#222;font-weight:normal;transform:translateX(-50%) scaleX(0.9);transform-origin:50% 0;">13.5</div>
<div style="left:534px;top:474px;width:1px;height:3px;background:#333;"></div>
<div style="left:534.38px;top:478.42px;font-size:9.3px;color:#222;font-weight:normal;transform:translateX(-50%) scaleX(0.9);transform-origin:50% 0;">14</div>
<div style="left:550px;top:474px;width:1px;height:3px;background:#333;"></div>
<div style="left:550.22px;top:478.42px;font-size:9.3px;color:#222;font-weight:normal;transform:translateX(-50%) scaleX(0.9);transform-origin:50% 0;">14.5</div>
<div style="left:566px;top:474px;width:1px;height:3px;background:#333;"></div>
<div style="left:566.05px;top:478.42px;font-size:9.3px;color:#222;font-weight:normal;transform:translateX(-50%) scaleX(0.9);transform-origin:50% 0;">15</div>
<div style="left:337.00px;top:489.36px;font-size:9px;color:#222;font-weight:normal;transform:translateX(-100%) scaleX(0.88);transform-origin:100% 0;">X-Axis</div>
<div style="left:607px;top:413px;width:2px;height:61px;background:repeating-linear-gradient(#c8c8c8 0 1px,#333 1px 2.2px);opacity:0.8"></div>
<div style="left:609.5px;top:413px;width:98px;height:61px;background:#000;"></div>
<div style="left:604.30px;top:409.52px;font-size:9.3px;color:#222;font-weight:normal;transform:translateX(-100%) scaleX(0.8);transform-origin:100% 0;">-0.05</div>
<div style="left:604.30px;top:435.02px;font-size:9.3px;color:#222;font-weight:normal;transform:translateX(-100%) scaleX(0.8);transform-origin:100% 0;">0.1</div>
<div style="left:604.30px;top:451.92px;font-size:9.3px;color:#222;font-weight:normal;transform:translateX(-100%) scaleX(0.8);transform-origin:100% 0;">0.2</div>
<div style="left:604.30px;top:469.42px;font-size:9.3px;color:#222;font-weight:normal;transform:translateX(-100%) scaleX(0.8);transform-origin:100% 0;">0.3</div>
<div style="left:52px;top:501px;width:665px;height:2px;background:#2c2c2c;"></div>
<div class="btn" style="left:183px;top:504.5px;width:88px;height:15.0px;background:linear-gradient(#dadada,#c4c4c4);border-left:1px solid #f0f0f0;border-top:1px solid #f4f4f4;border-right:2px solid #555;border-bottom:2px solid #666;"></div>
<div style="left:227.00px;top:506.94px;font-size:10.5px;color:#2a2aa8;font-weight:bold;transform:translateX(-50%) scaleX(0.95);transform-origin:50% 0;">Gates</div>
<div class="btn" style="left:516px;top:504.5px;width:90px;height:15.0px;background:linear-gradient(#dadada,#c4c4c4);border-left:1px solid #f0f0f0;border-top:1px solid #f4f4f4;border-right:2px solid #555;border-bottom:2px solid #666;"></div>
<div style="left:561.00px;top:506.94px;font-size:10.5px;color:#cc2020;font-weight:bold;transform:translateX(-50%) scaleX(0.95);transform-origin:50% 0;">Scan Sheet</div>
<div class="btn" style="left:612px;top:504.5px;width:88px;height:15.0px;background:linear-gradient(#dadada,#c4c4c4);border-left:1px solid #f0f0f0;border-top:1px solid #f4f4f4;border-right:2px solid #555;border-bottom:2px solid #666;"></div>
<div style="left:656.00px;top:506.94px;font-size:10.5px;color:#d89090;font-weight:bold;transform:translateX(-50%) scaleX(0.95);transform-origin:50% 0;">Re-Analyze</div>
<div style="left:48px;top:522px;width:670px;height:3px;background:linear-gradient(#c4d6ea,#e8eef6);"></div>
<div style="left:716px;top:18px;width:2px;height:503px;background:#dfe4f0;"></div>
</body></html>
